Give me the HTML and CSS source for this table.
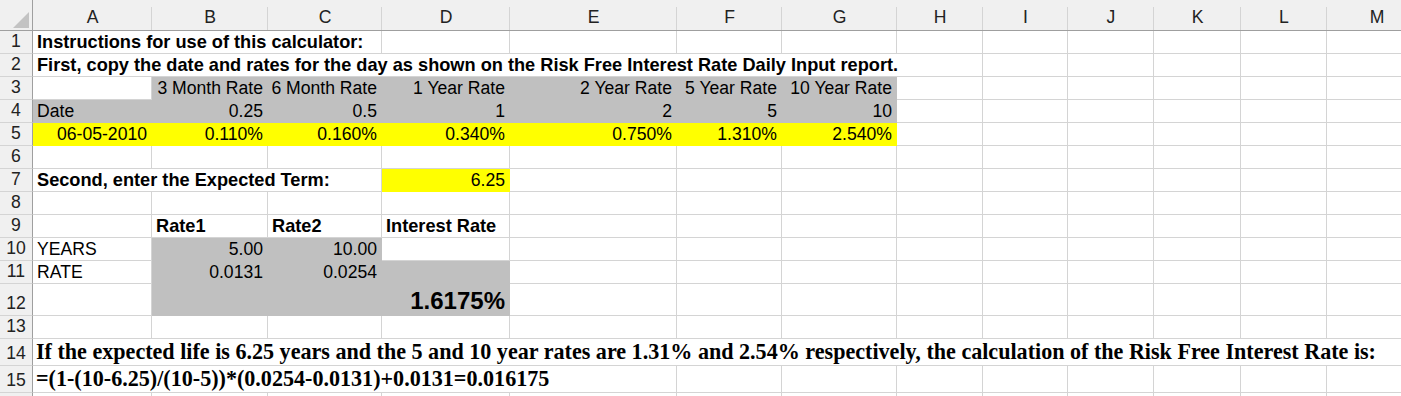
FILE: index.html
```html
<!DOCTYPE html>
<html>
<head>
<meta charset="utf-8">
<link rel="stylesheet" href="styles.css">
</head>
<body>
<div class="sheet">
  <!-- header row -->
  <div class="corner"><svg width="16" height="16" viewBox="0 0 16 16"><polygon points="16,0 16,16 0,16" fill="#c3c3c3"/></svg></div>
  <div class="hd">A</div><div class="hd">B</div><div class="hd">C</div><div class="hd">D</div><div class="hd">E</div><div class="hd">F</div><div class="hd">G</div><div class="hd">H</div><div class="hd">I</div><div class="hd">J</div><div class="hd">K</div><div class="hd">L</div><div class="hd">M</div>

  <!-- row 1 -->
  <div class="rh">1</div>
  <div class="c b s3">Instructions for use of this calculator:</div>
  <div class="c"></div><div class="c"></div><div class="c"></div><div class="c"></div><div class="c"></div><div class="c"></div><div class="c"></div><div class="c"></div><div class="c"></div><div class="c"></div>

  <!-- row 2 -->
  <div class="rh">2</div>
  <div class="c b s8">First, copy the date and rates for the day as shown on the Risk Free Interest Rate Daily Input report.</div>
  <div class="c"></div><div class="c"></div><div class="c"></div><div class="c"></div><div class="c"></div>

  <!-- row 3 -->
  <div class="rh">3</div>
  <div class="c"></div>
  <div class="c g r">3 Month Rate</div><div class="c g r">6 Month Rate</div><div class="c g r">1 Year Rate</div><div class="c g r">2 Year Rate</div><div class="c g r">5 Year Rate</div><div class="c g r">10 Year Rate</div>
  <div class="c"></div><div class="c"></div><div class="c"></div><div class="c"></div><div class="c"></div><div class="c"></div>

  <!-- row 4 -->
  <div class="rh">4</div>
  <div class="c g">Date</div>
  <div class="c g r">0.25</div><div class="c g r">0.5</div><div class="c g r">1</div><div class="c g r">2</div><div class="c g r">5</div><div class="c g r">10</div>
  <div class="c"></div><div class="c"></div><div class="c"></div><div class="c"></div><div class="c"></div><div class="c"></div>

  <!-- row 5 -->
  <div class="rh">5</div>
  <div class="c y r">06-05-2010</div>
  <div class="c y r">0.110%</div><div class="c y r">0.160%</div><div class="c y r">0.340%</div><div class="c y r">0.750%</div><div class="c y r">1.310%</div><div class="c y r">2.540%</div>
  <div class="c"></div><div class="c"></div><div class="c"></div><div class="c"></div><div class="c"></div><div class="c"></div>

  <!-- row 6 -->
  <div class="rh">6</div>
  <div class="c"></div><div class="c"></div><div class="c"></div><div class="c"></div><div class="c"></div><div class="c"></div><div class="c"></div><div class="c"></div><div class="c"></div><div class="c"></div><div class="c"></div><div class="c"></div><div class="c"></div>

  <!-- row 7 -->
  <div class="rh">7</div>
  <div class="c b s3">Second, enter the Expected Term:</div>
  <div class="c y r">6.25</div>
  <div class="c"></div><div class="c"></div><div class="c"></div><div class="c"></div><div class="c"></div><div class="c"></div><div class="c"></div><div class="c"></div><div class="c"></div>

  <!-- row 8 -->
  <div class="rh">8</div>
  <div class="c"></div><div class="c"></div><div class="c"></div><div class="c"></div><div class="c"></div><div class="c"></div><div class="c"></div><div class="c"></div><div class="c"></div><div class="c"></div><div class="c"></div><div class="c"></div><div class="c"></div>

  <!-- row 9 -->
  <div class="rh">9</div>
  <div class="c"></div>
  <div class="c b">Rate1</div><div class="c b">Rate2</div><div class="c b">Interest Rate</div>
  <div class="c"></div><div class="c"></div><div class="c"></div><div class="c"></div><div class="c"></div><div class="c"></div><div class="c"></div><div class="c"></div><div class="c"></div>

  <!-- row 10 -->
  <div class="rh">10</div>
  <div class="c">YEARS</div>
  <div class="c g r">5.00</div><div class="c g r">10.00</div><div class="c"></div>
  <div class="c"></div><div class="c"></div><div class="c"></div><div class="c"></div><div class="c"></div><div class="c"></div><div class="c"></div><div class="c"></div><div class="c"></div>

  <!-- row 11 -->
  <div class="rh">11</div>
  <div class="c">RATE</div>
  <div class="c g r">0.0131</div><div class="c g r">0.0254</div><div class="c g"></div>
  <div class="c"></div><div class="c"></div><div class="c"></div><div class="c"></div><div class="c"></div><div class="c"></div><div class="c"></div><div class="c"></div><div class="c"></div>

  <!-- row 12 -->
  <div class="rh">12</div>
  <div class="c"></div>
  <div class="c g"></div><div class="c g"></div><div class="c g r b big">1.6175%</div>
  <div class="c"></div><div class="c"></div><div class="c"></div><div class="c"></div><div class="c"></div><div class="c"></div><div class="c"></div><div class="c"></div><div class="c"></div>

  <!-- row 13 -->
  <div class="rh">13</div>
  <div class="c"></div><div class="c"></div><div class="c"></div><div class="c"></div><div class="c"></div><div class="c"></div><div class="c"></div><div class="c"></div><div class="c"></div><div class="c"></div><div class="c"></div><div class="c"></div><div class="c"></div>

  <!-- row 14 -->
  <div class="rh">14</div>
  <div class="c tm s13">If the expected life is 6.25 years and the 5 and 10 year rates are 1.31% and 2.54% respectively, the calculation of the Risk Free Interest Rate is:</div>

  <!-- row 15 -->
  <div class="rh">15</div>
  <div class="c tm s5">=(1-(10-6.25)/(10-5))*(0.0254-0.0131)+0.0131=0.016175</div>
  <div class="c"></div><div class="c"></div><div class="c"></div><div class="c"></div><div class="c"></div><div class="c"></div><div class="c"></div><div class="c"></div>

  <!-- row 16 (only its top edge is in view) -->
  <div class="rh"></div>
  <div class="c"></div><div class="c"></div><div class="c"></div><div class="c"></div><div class="c"></div><div class="c"></div><div class="c"></div><div class="c"></div><div class="c"></div><div class="c"></div><div class="c"></div><div class="c"></div><div class="c"></div>
</div>
</body>
</html>
```

FILE: styles.css
```css
* { box-sizing: border-box; }
html, body { margin: 0; padding: 0; background: #ffffff; overflow: hidden; }

.sheet {
  display: grid;
  grid-template-columns: 33px 119px 116px 114px 128px 167px 105px 115px 86px 85px 86px 87px 86px 100px;
  grid-template-rows: 31px repeat(11, 23px) 32px 23px 27px 27px 23px;
  width: 1427px;
  font-family: "Liberation Sans", Arial, sans-serif;
  font-size: 17.6px;
  color: #000;
}

.corner {
  background: #f0f0f0;
  border-right: 1px solid #9f9f9f;
  border-bottom: 1px solid #9f9f9f;
  display: flex;
  align-items: flex-end;
  justify-content: flex-end;
  padding: 0 3px 2px 0;
}
.corner svg { display: block; }

.hd {
  background: linear-gradient(#d4d4d4, #d4d4d4) right bottom / 1px 23px no-repeat, #f0f0f0;
  border-bottom: 1px solid #9f9f9f;
  display: flex;
  align-items: flex-end;
  justify-content: center;
  padding-bottom: 2px;
  color: #222;
  font-size: 17.6px;
}

.rh {
  background: #f0f0f0;
  border-right: 1px solid #9f9f9f;
  border-bottom: 1px solid #d4d4d4;
  display: flex;
  align-items: flex-end;
  justify-content: center;
  padding-bottom: 1px;
  color: #222;
}

.c {
  border-right: 1px solid #d4d4d4;
  border-bottom: 1px solid #d4d4d4;
  display: flex;
  align-items: flex-end;
  padding: 0 4px 1px 4px;
  white-space: nowrap;
  line-height: 20px;
}
.r { justify-content: flex-end; }
.b { font-weight: bold; font-size: 18.2px; }
.g { background: #c0c0c0; border-color: #c0c0c0; }
.y { background: #ffff00; border-color: #ffff00; }
.big { font-size: 24px; line-height: 28px; padding-bottom: 0; }
.tm {
  font-family: "Liberation Serif", "Times New Roman", serif;
  font-weight: bold;
  font-size: 22.1px;
  line-height: 25px;
  padding-left: 3px;
}

.s3 { grid-column: span 3; }
.s5 { grid-column: span 5; }
.s8 { grid-column: span 8; }
.s13 { grid-column: span 13; }
```
